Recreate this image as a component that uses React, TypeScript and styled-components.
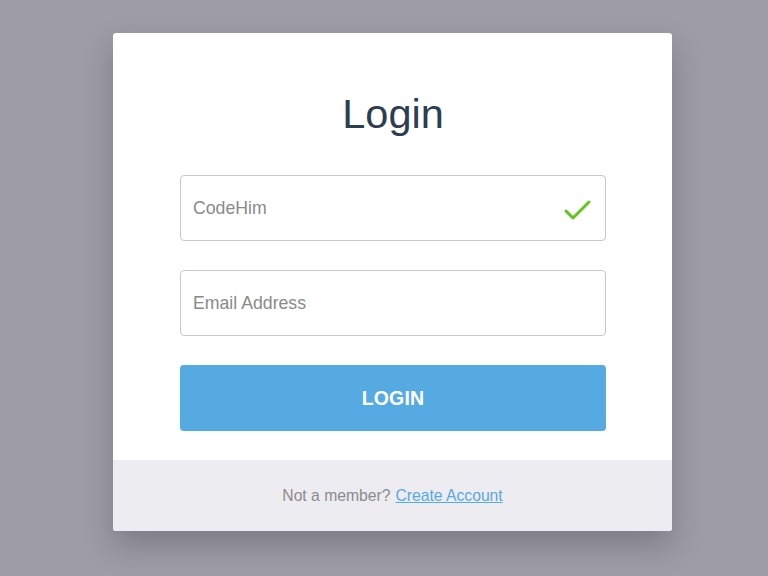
import React from "react";
import styled, { createGlobalStyle } from "styled-components";

const Global = createGlobalStyle`
  html, body { margin: 0; padding: 0; }
  body {
    background: #9e9ca6;
    font-family: "Liberation Sans", Arial, sans-serif;
    width: 768px;
    height: 576px;
    overflow: hidden;
  }
`;

const Page = styled.div`
  padding: 33px 0 0 113px;
`;

const Card = styled.div`
  width: 559px;
  background: #ffffff;
  border-radius: 3px;
  overflow: hidden;
  box-shadow: 0 14px 30px rgba(40, 38, 50, 0.28);
`;

const Body = styled.form`
  padding: 57px 66px 29px 67px;
  display: flex;
  flex-direction: column;
`;

const Title = styled.h1`
  margin: 0 0 37px;
  text-align: center;
  font-size: 41.5px;
  line-height: 48px;
  font-weight: 400;
  color: #2c3e50;
`;

const Field = styled.div`
  position: relative;
  margin-bottom: ${(p: { $gap: number }) => p.$gap}px;
`;

const Input = styled.input`
  box-sizing: border-box;
  width: 426px;
  height: 66px;
  border: 1px solid #c8c7d0;
  border-radius: 4px;
  padding: 0 12px;
  font-family: "Liberation Sans", Arial, sans-serif;
  font-size: 17.7px;
  color: #8a8a8a;
  background: #fff;
  outline: none;
  &::placeholder { color: #8a8a8a; opacity: 1; }
`;

const Check = styled.svg`
  position: absolute;
  right: 14px;
  top: 25px;
`;

const Button = styled.button`
  box-sizing: border-box;
  width: 426px;
  height: 66px;
  border: none;
  border-radius: 4px;
  background: #55aae2;
  color: #fff;
  font-family: "Liberation Sans", Arial, sans-serif;
  font-size: 19.5px;
  font-weight: 700;
  letter-spacing: 0.2px;
  cursor: pointer;
`;

const Footer = styled.div`
  height: 71px;
  background: #edecf0;
  display: flex;
  align-items: center;
  justify-content: center;
  font-size: 15.7px;
  color: #8b8b8b;
  gap: 5px;
`;

const Link = styled.a`
  color: #55aae2;
  text-decoration: underline;
`;

export default function App() {
  return (
    <>
      <Global />
      <Page>
        <Card>
          <Body onSubmit={(e) => e.preventDefault()}>
            <Title>Login</Title>
            <Field $gap={29}>
              <Input defaultValue="CodeHim" />
              <Check width="28" height="22" viewBox="0 0 28 22">
                <path d="M2 11 L9 18 L25 2" fill="none" stroke="#62c51c" strokeWidth="3" strokeLinecap="round" strokeLinejoin="round" />
              </Check>
            </Field>
            <Field $gap={29}>
              <Input placeholder="Email Address" />
            </Field>
            <Button type="submit">LOGIN</Button>
          </Body>
          <Footer>
            <span>Not a member?</span>
            <Link href="#">Create Account</Link>
          </Footer>
        </Card>
      </Page>
    </>
  );
}
